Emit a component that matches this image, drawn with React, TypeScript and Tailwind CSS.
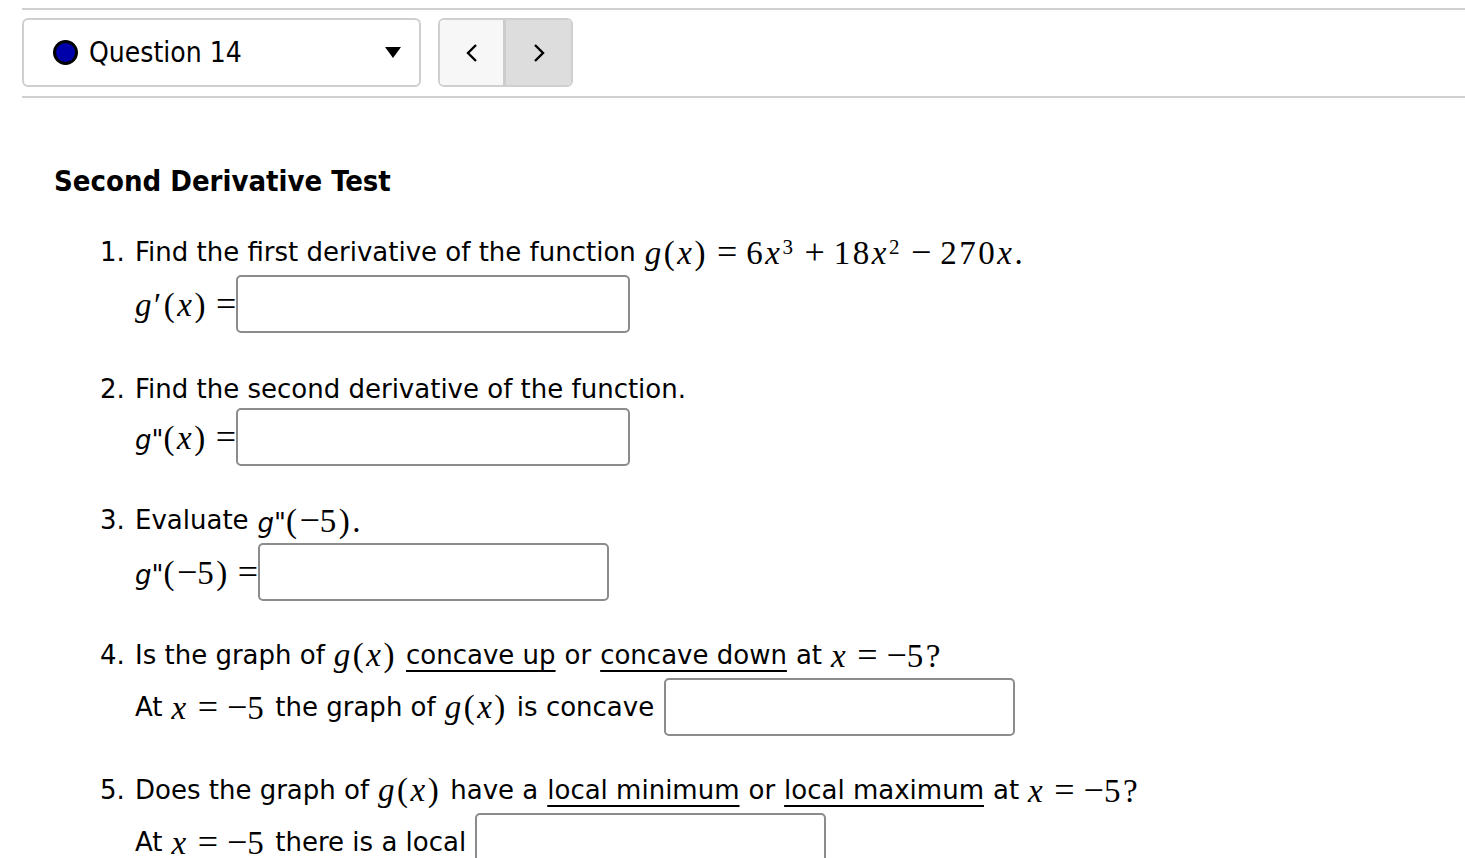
import React from "react"

const mathFont = "font-['Liberation_Serif','Times_New_Roman',serif]"
const sansFont = "font-['DejaVu_Sans','Liberation_Sans',sans-serif]"
const condFont = "font-['DejaVu_Sans_Condensed','Liberation_Sans',sans-serif]"

function V({ children }: { children: React.ReactNode }) {
  return <span className="italic">{children}</span>
}

function M({ children }: { children: React.ReactNode }) {
  return <span className={`${mathFont} text-[33px] leading-none tracking-[2.5px] whitespace-nowrap`}>{children}</span>
}

function Op({ c, l = "mx-[9px]" }: { c: string; l?: string }) {
  return <span className={`${l} text-[36px] leading-none tracking-normal`}>{c}</span>
}

function Gx() {
  return (
    <M>
      <V>g</V>(<V>x</V>)
    </M>
  )
}

function G2() {
  return <span className={`${sansFont} italic text-[26px] tracking-normal`}>g"</span>
}

function Answer({ w }: { w: string }) {
  return <div className={`${w} h-[58px] shrink-0 rounded-[5px] border-2 border-[#8c8c8c] bg-white`} />
}

function Item({
  n,
  tight,
  extra = "",
  line,
  children,
}: {
  n: number
  tight?: boolean
  extra?: string
  line: React.ReactNode
  children: React.ReactNode
}) {
  return (
    <li className={`flex ${extra}`}>
      <span className="w-[35px] shrink-0 h-[46px] flex items-center">{n}.</span>
      <div className="flex flex-col">
        <div className="h-[46px] flex items-center whitespace-nowrap">{line}</div>
        <div className={`flex items-center whitespace-nowrap ${tight ? "-mt-[4px]" : ""}`}>{children}</div>
      </div>
    </li>
  )
}

function Underlined({ children }: { children: React.ReactNode }) {
  return <span className="underline underline-offset-[6px] decoration-2">{children}</span>
}

export default function App() {
  return (
    <div className={`h-[858px] overflow-hidden bg-white text-black ${sansFont}`}>
      <div className="ml-[22px] mt-[8px] border-t-2 border-[#d0d0d0] pt-[8px]">
        <div className="flex gap-[17px]">
          <button className="w-[399px] h-[69px] rounded-[6px] border-2 border-[#cfcfcf] bg-white flex items-center pl-[29px] pr-[18px]">
            <span className="w-[25px] h-[25px] rounded-full bg-[#0000aa] border-[3px] border-black" />
            <span className={`ml-[11px] text-[28px] flex-1 text-left ${condFont}`}>Question 14</span>
            <svg width="16" height="11" viewBox="0 0 16 11">
              <path d="M0 0 H16 L8 11 Z" fill="#000" />
            </svg>
          </button>
          <div className="w-[135px] h-[69px] rounded-[6px] border-2 border-[#cfcfcf] overflow-hidden flex">
            <button className="w-[66px] bg-[#f7f7f7] border-r-[3px] border-[#cccccc] flex items-center justify-center">
              <svg width="12" height="20" viewBox="0 0 12 20">
                <path d="M10 2 L2 10 L10 18" stroke="#000" strokeWidth="2.4" fill="none" />
              </svg>
            </button>
            <button className="flex-1 bg-[#dddddd] flex items-center justify-center">
              <svg width="12" height="20" viewBox="0 0 12 20">
                <path d="M2 2 L10 10 L2 18" stroke="#000" strokeWidth="2.4" fill="none" />
              </svg>
            </button>
          </div>
        </div>
        <div className="mt-[9px] border-t-2 border-[#d0d0d0]" />
      </div>

      <div className="pl-[54px]">
        <h2 className={`mt-[65px] text-[29px] leading-[36px] font-bold ${condFont}`}>Second Derivative Test</h2>
        <ol className="mt-[30px] pl-[46px] text-[26px] flex flex-col gap-[31px]">
          <Item
            n={1}
            line={
              <>
                <span className="mr-[9px]">Find the first derivative of the function</span>
                <M>
                  <V>g</V>(<V>x</V>)<Op c="=" />6<V>x</V>
                  <sup className="text-[21px]">3</sup>
                  <Op c="+" />18<V>x</V>
                  <sup className="text-[21px]">2</sup>
                  <Op c="−" />270<V>x</V>.
                </M>
              </>
            }
          >
            <M>
              <V>g</V>′(<V>x</V>)<Op c="=" l="ml-[8px]" />
            </M>
            <Answer w="w-[394px]" />
          </Item>

          <Item n={2} tight extra="mt-[2px]" line={<span>Find the second derivative of the function.</span>}>
            <M>
              <G2 />(<V>x</V>)<Op c="=" l="ml-[8px]" />
            </M>
            <Answer w="w-[394px]" />
          </Item>

          <Item
            n={3}
            line={
              <>
                <span className="mr-[9px]">Evaluate</span>
                <M>
                  <G2 />(<Op c="−" l="mx-0" />5).
                </M>
              </>
            }
          >
            <M>
              <G2 />(<Op c="−" l="mx-0" />5)<Op c="=" l="ml-[8px]" />
            </M>
            <Answer w="w-[351px]" />
          </Item>

          <Item
            n={4}
            line={
              <>
                <span className="mr-[9px]">Is the graph of</span>
                <Gx />
                <span className="ml-[9px]">
                  <Underlined>concave up</Underlined>
                </span>
                <span className="mx-[9px]">or</span>
                <Underlined>concave down</Underlined>
                <span className="mx-[9px]">at</span>
                <M>
                  <V>x</V>
                  <Op c="=" />
                  <Op c="−" l="mx-0" />5?
                </M>
              </>
            }
          >
            <span className="mr-[9px]">At</span>
            <M>
              <V>x</V>
              <Op c="=" />
              <Op c="−" l="mx-0" />5
            </M>
            <span className="mx-[9px]">the graph of</span>
            <Gx />
            <span className="ml-[9px] mr-[10px]">is concave</span>
            <Answer w="w-[351px]" />
          </Item>

          <Item
            n={5}
            line={
              <>
                <span className="mr-[9px]">Does the graph of</span>
                <Gx />
                <span className="mx-[9px]">have a</span>
                <Underlined>local minimum</Underlined>
                <span className="mx-[9px]">or</span>
                <Underlined>local maximum</Underlined>
                <span className="mx-[9px]">at</span>
                <M>
                  <V>x</V>
                  <Op c="=" />
                  <Op c="−" l="mx-0" />5?
                </M>
              </>
            }
          >
            <span className="mr-[9px]">At</span>
            <M>
              <V>x</V>
              <Op c="=" />
              <Op c="−" l="mx-0" />5
            </M>
            <span className="mx-[9px]">there is a local</span>
            <Answer w="w-[351px]" />
          </Item>
        </ol>
      </div>
    </div>
  )
}
